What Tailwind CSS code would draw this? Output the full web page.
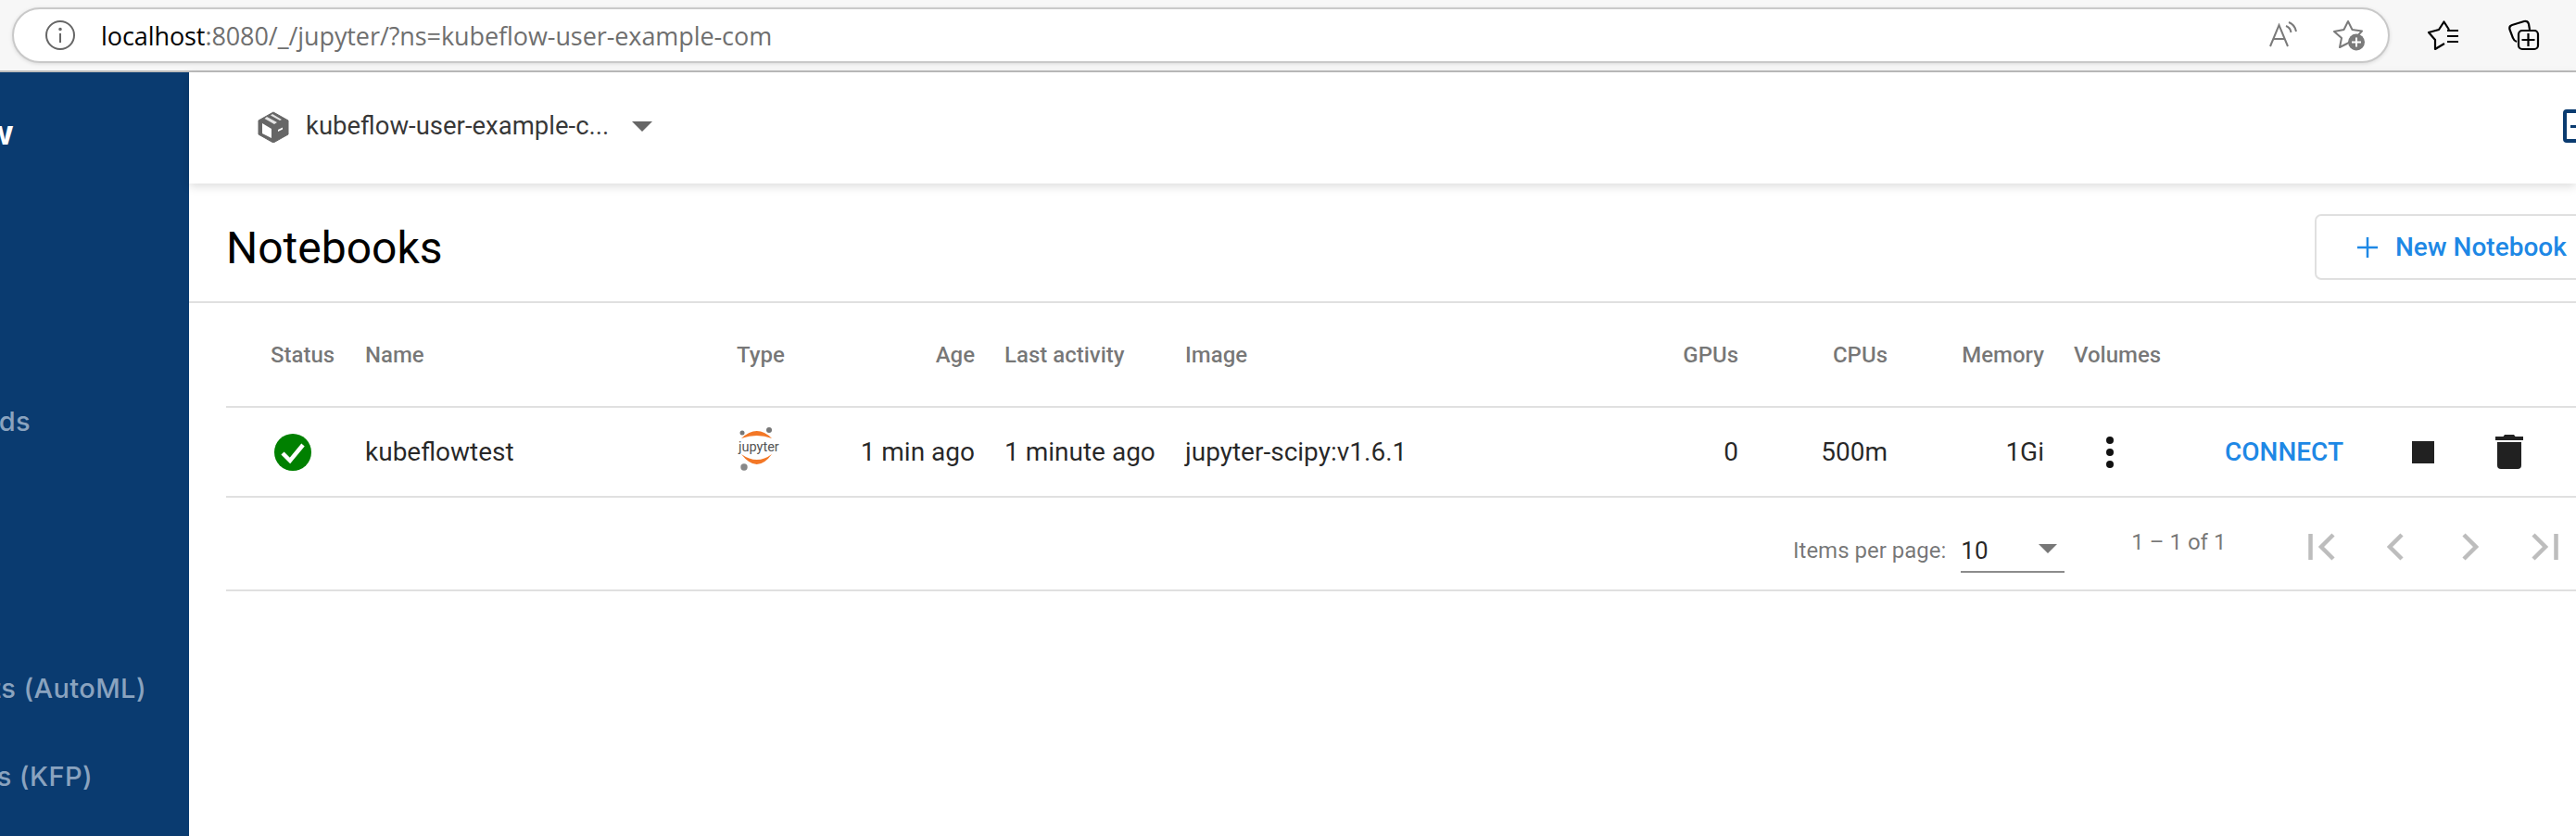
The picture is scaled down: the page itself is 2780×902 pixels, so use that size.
<!DOCTYPE html>
<html>
<head>
<meta charset="utf-8">
<script src="https://cdn.jsdelivr.net/npm/@tailwindcss/browser@4"></script>
</head>
<body class="bg-white">
<div class="w-[2780px] h-[902px] overflow-hidden flex flex-col font-['Roboto',sans-serif]">
  <!-- browser toolbar -->
  <div class="h-[78px] shrink-0 bg-[#f7f7f7] border-b-2 border-[#bdbdbd] flex items-start">
    <div class="ml-[13px] mt-[8px] w-[2566px] h-[60px] bg-white border-2 border-[#c9c9c9] rounded-[30px] shadow-[0_1px_4px_rgba(0,0,0,0.12)] flex items-center">
      <svg class="ml-[33px] w-[34px] h-[34px]" viewBox="0 0 34 34" fill="none" stroke="#666" stroke-width="2"><circle cx="17" cy="17" r="15"/><path d="M17 15v10"/><circle cx="17" cy="10.500" r="0.800"/></svg>
      <div class="ml-[27px] text-[27px] leading-none font-['Open_Sans',sans-serif] tracking-[-0.08px] whitespace-nowrap text-[#6f6f6f]"><span class="text-black">localhost</span>:8080/_/jupyter/?ns=kubeflow-user-example-com</div>
      <div class="ml-auto flex items-center">
        <svg class="w-[32px] h-[32px]" viewBox="0 0 32 32" fill="none" stroke="#7a7a7a" stroke-width="2"><path d="M1 28 L10.500 5 L20 28 M4.500 20 H16.500"/><path d="M18 6 C21 7 23 10 23.500 13 M21 2 C25 3.500 28 7 29 12"/></svg>
        <svg class="ml-[37px] mr-[23px] w-[36px] h-[34px]" viewBox="0 0 36 34" fill="none"><path d="M16 2 L20.500 11 L31 12.500 L24 20 L15 26 L7 30 L9 20 L1 13 L11.500 11 Z" stroke="#7a7a7a" stroke-width="2" stroke-linejoin="round"/><circle cx="25" cy="24.500" r="9" fill="#7a7a7a"/><path d="M25 19.500v10M20 24.500h10" stroke="#fff" stroke-width="2"/></svg>
      </div>
    </div>
    <svg class="ml-[40px] mt-[22px] w-[36px] h-[34px]" viewBox="0 0 36 34" fill="none" stroke="#000" stroke-width="2.200" stroke-linejoin="round"><path d="M24 10 L18.500 1.500 L13 10 L2 13 L9 21 L9 31 L19 25"/><path d="M22 11h12M22 17h12M22 23h12"/></svg>
    <svg class="ml-[52px] mt-[21px] w-[34px] h-[34px]" viewBox="0 0 34 34" fill="none" stroke="#000" stroke-width="2.200"><path d="M9 24 Q6 23 5 20 L1.500 11 Q0.500 7 4 6 L17 2 Q21 1 22 5 L23 11"/><rect x="11" y="12" width="21" height="20" rx="4" fill="#f7f7f7"/><path d="M21.500 15v14M14.500 22h14"/></svg>
  </div>

  <div class="flex flex-1 min-h-0">
    <!-- sidebar -->
    <div class="w-[204px] shrink-0 bg-[#0a3b70] overflow-hidden font-['Inter',sans-serif] font-medium text-[29px] tracking-[0.4px] leading-[34px] text-[#8aa3bf] whitespace-nowrap">
      <div class="h-[55px] mt-[47px] flex justify-end w-[15px] text-white font-bold text-[36px] leading-[36px]">Kubeflow</div>
      <div class="mt-[258px] flex justify-end w-[33px]">Tensorboards</div>
      <div class="mt-[254px] flex justify-end w-[158px]">Experiments (AutoML)</div>
      <div class="mt-[61px] flex justify-end w-[100px]">Experiments (KFP)</div>
    </div>

    <!-- content -->
    <div class="flex-1 min-w-0 flex flex-col">
      <div class="h-[120px] shrink-0 flex items-center pl-[74px] shadow-[0_3px_10px_rgba(0,0,0,0.14)] relative">
        <svg class="w-[34px] h-[34px] mb-[3px]" viewBox="0 0 34 34">
          <path d="M17 1 L33 10 V25 L17 34 L1 25 V10 Z" fill="#666" stroke="#666" stroke-linejoin="round"/>
          <path d="M5 13 L15 19 V29 L5 24 Z" fill="#fff"/>
          <path d="M7.500 8 L18 14 L21 12 L10 6 Z M14 4.500 L24 10 L26 9 L16 3 Z" fill="#e4e4e4"/>
          <path d="M22 20 L27 17.500 V19.500 L22 22 Z" fill="#fff"/>
        </svg>
        <div class="ml-[18px] mb-[4px] text-[27.500px] text-black/80 whitespace-nowrap">kubeflow-user-example-c...</div>
        <div class="ml-[25px] mb-[3px] w-0 h-0 border-l-[11px] border-r-[11px] border-t-[11px] border-l-transparent border-r-transparent border-t-[#666]"></div>
        <div class="absolute left-[2562px] top-[40px] w-[36px] h-[36px] border-[4px] border-[#0a3b70] rounded-[4px] bg-white flex items-center pl-[4px]"><div class="w-[8px] h-[3px] bg-[#0a3b70]"></div></div>
      </div>

      <div class="h-[129px] shrink-0 border-b-2 border-[#e0e0e0] flex items-center justify-between pl-[40px]">
        <div class="text-[48px] leading-none text-black mt-[13px]">Notebooks</div>
        <div class="mr-[-40px] mt-[10px] w-[322px] h-[71px] border-2 border-[#e0e0e0] rounded-[7px] flex items-center pl-[43px]">
          <svg class="w-[24px] h-[24px]" viewBox="0 0 24 24" stroke="#1e88e5" stroke-width="2.500"><path d="M12 1v22M1 12h22"/></svg>
          <div class="ml-[18px] text-[28px] font-medium text-[#1e88e5] whitespace-nowrap">New Notebook</div>
        </div>
      </div>

      <div class="ml-[40px]">
        <div class="h-[113px] border-b-2 border-[#e0e0e0] grid grid-cols-[150px_402px_114px_142px_227px_421px_176px_161px_169px_197px_200px_90px_1fr] items-center text-[24px] font-medium text-black/55 whitespace-nowrap">
          <div class="pl-[48px]">Status</div>
          <div>Name</div>
          <div class="-ml-[1px]">Type</div>
          <div class="text-right">Age</div>
          <div class="pl-[32px]">Last activity</div>
          <div>Image</div>
          <div class="text-right">GPUs</div>
          <div class="text-right">CPUs</div>
          <div class="text-right">Memory</div>
          <div class="pl-[32px]">Volumes</div>
        </div>
        <div class="h-[97px] border-b-2 border-[#e0e0e0] grid grid-cols-[150px_402px_114px_142px_227px_421px_176px_161px_169px_197px_200px_90px_1fr] items-center text-[28px] text-black/85 whitespace-nowrap">
          <div class="pl-[52px]">
            <svg class="w-[40px] h-[40px]" viewBox="0 0 40 40"><circle cx="20" cy="20" r="20" fill="#008000"/><path d="M9 21 L17 29 L31 12" fill="none" stroke="#fff" stroke-width="4.500"/></svg>
          </div>
          <div>kubeflowtest</div>
          <div class="-mt-[6px]">
            <svg class="w-[46px] h-[48px]" viewBox="0 0 46 48">
              <path d="M4 12 Q21 -4 37 12 Q21 6 4 12 Z" fill="#f37726"/>
              <path d="M4 29 Q21 51 37 29 Q21 41 4 29 Z" fill="#f37726"/>
              <circle cx="5" cy="6" r="2.500" fill="#777"/><circle cx="34" cy="3" r="3" fill="#777"/><circle cx="7" cy="43" r="3.700" fill="#888"/>
              <text x="1" y="26" font-size="14.500" fill="#555" font-family="Roboto">jupyter</text>
            </svg>
          </div>
          <div class="text-right">1 min ago</div>
          <div class="pl-[32px]">1 minute ago</div>
          <div>jupyter-scipy:v1.6.1</div>
          <div class="text-right">0</div>
          <div class="text-right">500m</div>
          <div class="text-right">1Gi</div>
          <div class="pl-[62px]">
            <svg class="w-[18px] h-[34px]" viewBox="0 0 18 34" fill="#111"><circle cx="9" cy="4" r="4"/><circle cx="9" cy="17" r="4"/><circle cx="9" cy="30" r="4"/></svg>
          </div>
          <div class="-ml-[2px] text-[28px] font-medium text-[#1e88e5]">CONNECT</div>
          <div><div class="w-[24px] h-[24px] bg-[#212121]"></div></div>
          <div>
            <svg class="w-[30px] h-[37px]" viewBox="0 0 30 37" fill="#212121"><path d="M10 0h10l1.500 2H30v4H0V2h8.500Z"/><path d="M2 8h26v25a4 4 0 0 1-4 4H6a4 4 0 0 1-4-4Z"/></svg>
          </div>
        </div>

        <div class="h-[101px] border-b-2 border-[#e0e0e0] relative">
          <div class="pl-[1691px] flex items-start text-[24px] text-black/55 whitespace-nowrap">
            <div class="mt-[43px] leading-[28px]">Items per page:</div>
            <div class="ml-[16px] mt-[38px] w-[112px] h-[43px] border-b-2 border-[#8c8c8c] flex items-start justify-between pr-[8px]">
              <div class="mt-[4px] text-[26px] leading-[30px] text-black/85">10</div>
              <div class="mt-[12px] w-0 h-0 border-l-[10px] border-r-[10px] border-t-[10px] border-l-transparent border-r-transparent border-t-[#777]"></div>
            </div>
            <div class="ml-[72px] mt-[34px] leading-[28px] w-[191px]">1 – 1 of 1</div>
            <svg class="mt-[38px] w-[30px] h-[30px]" viewBox="0 0 30 30" fill="none" stroke="#bdbdbd" stroke-width="4.500"><path d="M2.500 1v28"/><path d="M27 2 L14 15 L27 28"/></svg>
            <svg class="ml-[55px] mt-[38px] w-[18px] h-[30px]" viewBox="0 0 18 30" fill="none" stroke="#bdbdbd" stroke-width="4.500"><path d="M16 2 L3 15 L16 28"/></svg>
            <svg class="ml-[63px] mt-[38px] w-[18px] h-[30px]" viewBox="0 0 18 30" fill="none" stroke="#bdbdbd" stroke-width="4.500"><path d="M2 2 L15 15 L2 28"/></svg>
            <svg class="ml-[56px] mt-[38px] w-[30px] h-[30px]" viewBox="0 0 30 30" fill="none" stroke="#bdbdbd" stroke-width="4.500"><path d="M27.500 1v28"/><path d="M3 2 L16 15 L3 28"/></svg>
          </div>
        </div>
      </div>
    </div>
  </div>
</div>
</body>
</html>
